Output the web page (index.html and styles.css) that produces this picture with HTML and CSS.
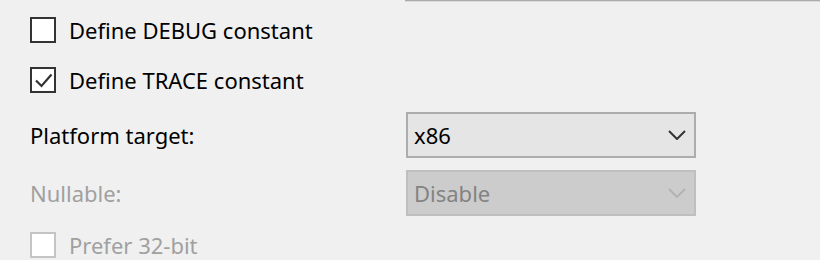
FILE: index.html
```html
<!DOCTYPE html>
<html>
<head>
<meta charset="utf-8">
<link rel="stylesheet" href="styles.css">
</head>
<body>
<div class="page">
  <div class="topedge"></div>
  <div class="form">
    <label class="row check-row r1">
      <span class="box"></span>
      <span class="text">Define DEBUG constant</span>
    </label>
    <label class="row check-row r2">
      <span class="box">
        <svg class="tick" width="22" height="22" viewBox="0 0 22 22"><path d="M4 11.5 L9.5 17 L19.5 5.5" fill="none" stroke="#333" stroke-width="2.2"/></svg>
      </span>
      <span class="text">Define TRACE constant</span>
    </label>
    <div class="row field-row r3">
      <span class="label">Platform target:</span>
      <div class="select">
        <span class="value">x86</span>
        <svg class="chev" width="18" height="10" viewBox="0 0 18 10"><path d="M1 1 L9 9 L17 1" fill="none" stroke="#333" stroke-width="2"/></svg>
      </div>
    </div>
    <div class="row field-row r4 disabled">
      <span class="label">Nullable:</span>
      <div class="select">
        <span class="value">Disable</span>
        <svg class="chev" width="18" height="10" viewBox="0 0 18 10"><path d="M1 1 L9 9 L17 1" fill="none" stroke="#b3b3b3" stroke-width="2"/></svg>
      </div>
    </div>
    <label class="row check-row r5 disabled">
      <span class="box"></span>
      <span class="text">Prefer 32-bit</span>
    </label>
  </div>
</div>
</body>
</html>
```
FILE: styles.css
```css
html, body {
  margin: 0;
  padding: 0;
  background: #f0f0f0;
}
body {
  width: 820px;
  height: 260px;
  overflow: hidden;
  font-family: "Noto Sans", "Open Sans", sans-serif;
  font-size: 22px;
  color: #000;
}
.page {
  display: flex;
  flex-direction: column;
}
.topedge {
  margin-left: 405px;
  height: 1px;
  background: #ababab;
  border-bottom: 1px solid #dadada;
}
.form {
  display: flex;
  flex-direction: column;
  padding-left: 30px;
  margin-top: 3px;
}
.row {
  display: flex;
  align-items: center;
}
.r1 { height: 50px; }
.r2 { height: 50px; }
.r3 { height: 60px; }
.r4 { height: 56px; }
.r5 { height: 48px; }
.box {
  width: 22px;
  height: 22px;
  border: 2px solid #333;
  background: #fff;
  display: flex;
  align-items: center;
  justify-content: center;
  flex: none;
}
.check-row .text {
  margin-left: 13px;
}
.label {
  width: 376px;
  flex: none;
}
.select {
  box-sizing: border-box;
  width: 290px;
  height: 46px;
  border: 2px solid #adadad;
  background: #e5e5e5;
  display: flex;
  align-items: center;
  justify-content: space-between;
  padding: 0 8px 0 6px;
}
.disabled .label,
.disabled .text {
  color: #a0a0a0;
}
.disabled .select {
  background: #cccccc;
  border-color: #bfbfbf;
}
.disabled .value {
  color: #838383;
}
.disabled .box {
  border-color: #c4c4c4;
}
```
